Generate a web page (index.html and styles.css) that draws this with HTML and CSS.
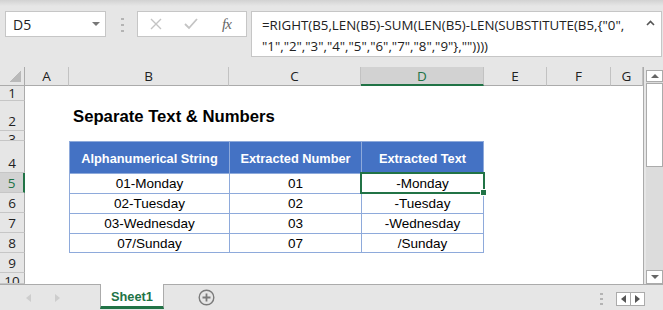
FILE: index.html
```html
<!DOCTYPE html>
<html>
<head>
	<meta charset="UTF-8">
	<title>Separate Text &amp; Numbers</title>
	<link rel="stylesheet" href="styles.css">
</head>
<body>
<div class="app">
	<div class="fbar">
		<div class="namebox"><span>D5</span><span class="ddarr"></span></div>
		<svg class="grip" width="3" height="14" viewBox="0 0 3 14"><rect x="0" y="0" width="3" height="2" fill="#b4b4b4"/><rect x="0" y="6" width="3" height="2" fill="#b4b4b4"/><rect x="0" y="12" width="3" height="2" fill="#b4b4b4"/></svg>
		<div class="fbtns">
			<svg class="fx-x" width="12" height="12" viewBox="0 0 12 12"><path d="M1 1 L11 11 M11 1 L1 11" stroke="#c4c4c4" stroke-width="1.4" fill="none"/></svg>
			<svg class="fx-ok" width="14" height="12" viewBox="0 0 14 12"><path d="M1 6 L5 10 L13 1" stroke="#c4c4c4" stroke-width="1.8" fill="none"/></svg>
			<span class="fx-fn">fx</span>
		</div>
		<div class="formula">
			<div class="ftext">=RIGHT(B5,LEN(B5)-SUM(LEN(B5)-LEN(SUBSTITUTE(B5,{"0",<br>"1","2","3","4","5","6","7","8","9"},""))))</div>
			<svg class="fcaret" width="9" height="6" viewBox="0 0 9 6"><path d="M1 5 L4.5 1.5 L8 5" stroke="#555" stroke-width="1.6" fill="none"/></svg>
		</div>
	</div>
	<div class="main">
		<div class="sheet">
			<div class="corner"></div><div class="ch">A</div><div class="ch">B</div><div class="ch">C</div><div class="ch on">D</div><div class="ch">E</div><div class="ch">F</div><div class="ch">G</div>

			<div class="rh short">1</div><div></div><div></div><div></div><div></div><div></div><div></div><div></div>

			<div class="rh">2</div><div></div><div class="title">Separate Text &amp; Numbers</div><div></div><div></div><div></div>

			<div class="rh top">3</div><div></div><div></div><div></div><div></div><div></div><div></div><div></div>

			<div class="rh">4</div><div></div>
			<div class="th">Alphanumerical String</div><div class="th">Extracted Number</div><div class="th last">Extracted Text</div>
			<div></div><div></div><div></div>

			<div class="rh on">5</div><div></div>
			<div class="td">01-Monday</div><div class="td">01</div><div class="td last sel">-Monday</div>
			<div></div><div></div><div></div>

			<div class="rh">6</div><div></div>
			<div class="td">02-Tuesday</div><div class="td">02</div><div class="td last">-Tuesday</div>
			<div></div><div></div><div></div>

			<div class="rh">7</div><div></div>
			<div class="td">03-Wednesday</div><div class="td">03</div><div class="td last">-Wednesday</div>
			<div></div><div></div><div></div>

			<div class="rh">8</div><div></div>
			<div class="td bot">07/Sunday</div><div class="td bot">07</div><div class="td bot last">/Sunday</div>
			<div></div><div></div><div></div>

			<div class="rh">9</div><div></div><div></div><div></div><div></div><div></div><div></div><div></div>

			<div class="rh top">10</div><div></div><div></div><div></div><div></div><div></div><div></div><div></div>
		</div>
		<div class="vscroll">
			<div class="sb-up"><span class="tri-up"></span></div>
			<div class="sb-track"><div class="sb-thumb"></div></div>
			<div class="sb-down"><span class="tri-down"></span></div>
		</div>
	</div>
	<div class="tabs">
		<div class="tabnav">
			<span class="tri-l"></span>
			<span class="tri-r"></span>
		</div>
		<div class="tab">Sheet1</div>
		<svg class="addsheet" width="17" height="17" viewBox="0 0 17 17"><circle cx="8.5" cy="8.5" r="7.3" stroke="#7a7a7a" stroke-width="1.4" fill="none"/><path d="M8.5 4.5 V12.5 M4.5 8.5 H12.5" stroke="#7a7a7a" stroke-width="1.8"/></svg>
		<svg class="hgrip" width="3" height="12" viewBox="0 0 3 12"><rect x="0" y="0" width="3" height="2" fill="#b4b4b4"/><rect x="0" y="5" width="3" height="2" fill="#b4b4b4"/><rect x="0" y="10" width="3" height="2" fill="#b4b4b4"/></svg>
		<div class="hnav">
			<div class="hbtn"><span class="tri-l dark"></span></div>
			<div class="hbtn"><span class="tri-r dark"></span></div>
		</div>
	</div>
</div>
</body>
</html>
```

FILE: styles.css
```css
body { margin: 0; background: #e6e6e6; font-family: "Liberation Sans", Arial, sans-serif; color: #000; }
.app { width: 663px; height: 310px; display: flex; flex-direction: column; overflow: hidden; }

/* formula bar */
.fbar { height: 67px; box-sizing: border-box; padding: 11px 0 0 5px; display: flex; align-items: flex-start;
	background: linear-gradient(#d2d2d2, #e6e6e6 6px); }
.namebox { width: 101px; height: 26px; box-sizing: border-box; border: 1px solid #c6c6c6; background: #fff;
	display: flex; align-items: center; padding: 0 5px 0 7px; font: 14px "Open Sans", sans-serif; color: #222; }
.ddarr { margin-left: auto; width: 0; height: 0; border-left: 4px solid transparent; border-right: 4px solid transparent;
	border-top: 4px solid #777; }
.grip { margin: 7px 13px 0 15px; }
.fbtns { width: 110px; height: 26px; box-sizing: border-box; border: 1px solid #c6c6c6; background: #fff;
	display: flex; align-items: center; padding-left: 12px; }
.fx-ok { margin-left: 22px; }
.fx-fn { margin-left: 24px; font: italic 15px "Liberation Serif", serif; color: #666; letter-spacing: -1px; }
.formula { margin-left: 4px; width: 411px; height: 46px; box-sizing: border-box; border: 1px solid #c6c6c6; background: #fff;
	display: flex; align-items: flex-start; padding: 3px 0 0 10px; }
.ftext { font: 13.3px/21px "Open Sans", sans-serif; color: #222; white-space: nowrap; }
.fcaret { margin: 5px 6px 0 auto; }

/* sheet */
.main { height: 217px; display: flex; }
.sheet { width: 644px; box-sizing: border-box; border-right: 1px solid #ababab; background: #fff; display: grid;
	grid-template-columns: 25px 44px 160px 132px 123px 63px 64px 32px;
	grid-template-rows: 19px 15px 30px 10px 32px 20px 20px 20px 20px 20px 11px; overflow: hidden; }
.sheet > div { overflow: hidden; min-width: 0; }
.corner { background: #e6e6e6 linear-gradient(135deg, transparent 50%, #b9b9b9 50%) no-repeat right 3px bottom 3px / 11px 11px;
	border-right: 1px solid #ababab; border-bottom: 1px solid #ababab; }
.ch { background: #e6e6e6; border-right: 1px solid #c2c2c2; border-bottom: 1px solid #ababab; display: flex;
	align-items: center; justify-content: center; font: 13.5px "Open Sans", sans-serif; color: #222; }
.ch.on { background: #d2d2d2; border-bottom: 2px solid #217346; color: #217346; }
.rh { background: #e6e6e6; border-right: 1px solid #ababab; border-bottom: 1px solid #c6c6c6; display: flex;
	align-items: flex-end; justify-content: center; font: 13.5px/17px "Open Sans", sans-serif; color: #222; }
.rh.short { line-height: 14px; }
.rh.top { align-items: flex-start; line-height: 14px; padding-top: 1px; }
.rh.top:last-of-type { padding-top: 5px; }
.rh.on { background: #d2d2d2; border-right: 2px solid #217346; color: #217346; }
.title { grid-column: span 3; display: flex; align-items: flex-end; padding: 0 0 4px 4px; font-weight: bold;
	font-size: 16.7px; white-space: nowrap; }
.th, .td { box-sizing: border-box; border-left: 1px solid #8eaadb; border-top: 1px solid #8eaadb; display: flex;
	justify-content: center; white-space: nowrap; }
.th { background: #4472c4; color: #fff; font-weight: bold; font-size: 12.8px; align-items: flex-end; padding-bottom: 7px; }
.td { font-size: 13.5px; align-items: center; }
.th.last, .td.last { border-right: 1px solid #8eaadb; }
.td.bot { border-bottom: 1px solid #8eaadb; }
.sheet > .td.sel { position: relative; overflow: visible; }
.td.sel::before { content: ""; position: absolute; left: -2px; top: -2px; right: -2px; bottom: -1px;
	border: 2px solid #217346; }
.td.sel::after { content: ""; position: absolute; right: -4px; bottom: -3px; width: 5px; height: 5px;
	background: #217346; border: 1px solid #fff; }

/* vertical scrollbar */
.vscroll { margin-left: 2px; width: 17px; padding-top: 3px; display: flex; flex-direction: column; }
.sb-up, .sb-down { box-sizing: border-box; border: 1px solid #ababab; background: #fff; display: flex;
	align-items: center; justify-content: center; }
.sb-up { height: 12px; }
.sb-down { height: 14px; }
.sb-track { flex: 1; background: #dcdcdc; padding-top: 1px; }
.sb-thumb { height: 84px; box-sizing: border-box; border: 1px solid #ababab; background: #fff; }
.tri-up { border-left: 4px solid transparent; border-right: 4px solid transparent; border-bottom: 4px solid #666; }
.tri-down { border-left: 4px solid transparent; border-right: 4px solid transparent; border-top: 4px solid #666; }

/* sheet tabs */
.tabs { height: 26px; box-sizing: border-box; border-top: 1px solid #ababab; display: flex; align-items: flex-start; }
.tabnav { width: 100px; display: flex; padding: 9px 0 0 26px; box-sizing: border-box; }
.tri-l { width: 0; height: 0; border-top: 4px solid transparent; border-bottom: 4px solid transparent; border-right: 5px solid #cdcdcd; }
.tri-r { width: 0; height: 0; border-top: 4px solid transparent; border-bottom: 4px solid transparent; border-left: 5px solid #cdcdcd;
	margin-left: 24px; }
.tab { margin-top: -1px; width: 64px; height: 25px; box-sizing: border-box; background: #fff; border-left: 1px solid #ababab;
	border-right: 1px solid #ababab; border-bottom: 3px solid #217346; display: flex; align-items: center; justify-content: center;
	color: #217346; font-weight: bold; font-size: 12.8px; padding-top: 2px; }
.addsheet { margin: 4px 0 0 34px; }
.hgrip { margin: 8px 0 0 385px; }
.hnav { margin: 7px 0 0 13px; display: flex; border: 1px solid #ababab; background: #fff; height: 14px; box-sizing: border-box; }
.hbtn { width: 13px; display: flex; align-items: center; justify-content: center; }
.hbtn + .hbtn { border-left: 1px solid #ababab; }
.tri-l.dark { border-right-color: #555; }
.tri-r.dark { border-left-color: #555; margin-left: 0; }
```
